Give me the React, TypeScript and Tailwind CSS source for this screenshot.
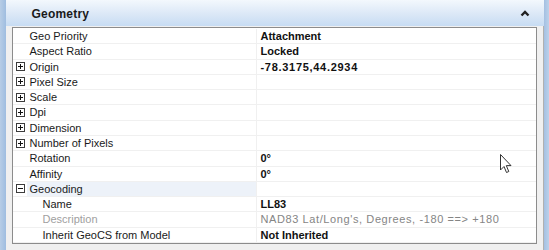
import React from "react";

type Row = {
  label: string;
  value?: string;
  expander?: "plus" | "minus";
  indent?: boolean;
  muted?: boolean;
  category?: boolean;
  wide?: boolean;
};

const rows: Row[] = [
  { label: "Geo Priority", value: "Attachment" },
  { label: "Aspect Ratio", value: "Locked" },
  { label: "Origin", value: "-78.3175,44.2934", expander: "plus", wide: true },
  { label: "Pixel Size", expander: "plus" },
  { label: "Scale", expander: "plus" },
  { label: "Dpi", expander: "plus" },
  { label: "Dimension", expander: "plus" },
  { label: "Number of Pixels", expander: "plus" },
  { label: "Rotation", value: "0°" },
  { label: "Affinity", value: "0°" },
  { label: "Geocoding", expander: "minus", category: true },
  { label: "Name", value: "LL83", indent: true },
  { label: "Description", value: "NAD83 Lat/Long's, Degrees, -180 ==> +180", indent: true, muted: true },
  { label: "Inherit GeoCS from Model", value: "Not Inherited", indent: true },
];

function Expander({ kind }: { kind: "plus" | "minus" }) {
  return (
    <svg width="9" height="9" viewBox="0 0 9 9" className="block">
      <rect x="0.5" y="0.5" width="8" height="8" fill="#fff" stroke="#3c3c3c" />
      <line x1="2" y1="4.5" x2="7" y2="4.5" stroke="#111" strokeWidth="1" />
      {kind === "plus" && <line x1="4.5" y1="2" x2="4.5" y2="7" stroke="#111" strokeWidth="1" />}
    </svg>
  );
}

export default function App() {
  return (
    <div
      className="relative flex w-[549px] h-[250px] overflow-hidden bg-[#f0f0f0] text-[11px] text-[#111]"
      style={{ fontFamily: "'Liberation Sans', Arial, sans-serif" }}
    >
      <div className="w-[6px] h-full bg-gradient-to-r from-[#b7cde6] to-[#9fbde0]" />
      <div className="flex-1 flex flex-col">
        <div className="h-[26px] flex items-center pl-[26px] pr-[14px] bg-gradient-to-b from-[#f3f8fd] via-[#dde9f7] to-[#c7dcf3]">
          <span className="font-bold text-[12px] text-[#1a1a1a] flex-1 pt-[2px] tracking-[0.2px]">Geometry</span>
          <svg width="10" height="8" viewBox="0 0 10 8">
            <polyline points="1.5,6.5 5,3 8.5,6.5" fill="none" stroke="#222" strokeWidth="2.4" />
          </svg>
        </div>
        <div className="flex-1 flex pl-[6px] pr-[6px] pt-[1px] border-r border-[#b0b0b0]">
          <div className="w-[525px] h-[217px] border border-[#8c8c8c] bg-white flex flex-col pt-[1px]">
            {rows.map((r, i) => (
              <div key={i} className="h-[15.4px] flex border-b border-[#f0f0f0] leading-[14px]">
                <div className="w-[14px] flex items-center justify-center pl-[1px]">
                  {r.expander && <Expander kind={r.expander} />}
                </div>
                <div
                  className={
                    "w-[230px] border-r border-[#f0f0f0] whitespace-nowrap " +
                    (r.indent ? "pl-[16px] " : "pl-[3px] ") +
                    (r.category ? "bg-[#edf2f9] " : "") +
                    (r.muted ? "text-[#a0a0a0]" : "text-[#1a1a1a]")
                  }
                >
                  {r.label}
                </div>
                <div
                  className={
                    "flex-1 pl-[4px] whitespace-nowrap " +
                    (r.muted ? "text-[#858585] tracking-[0.6px]" : "font-bold text-[#111]") +
                    (r.wide ? " tracking-[0.7px]" : "")
                  }
                >
                  {r.value}
                </div>
              </div>
            ))}
          </div>
        </div>
      </div>
      <div className="w-[6px] h-full bg-gradient-to-r from-[#a4c0e2] to-[#bcd1ea]" />
      <svg className="absolute left-[500px] top-[154px]" width="13" height="20" viewBox="0 0 13 20">
        <path d="M0.5 0.5 L0.5 16 L4 12.5 L6.5 18.5 L8.8 17.5 L6.3 11.6 L11 11.6 Z" fill="#fff" stroke="#333" strokeWidth="1" />
      </svg>
    </div>
  );
}
